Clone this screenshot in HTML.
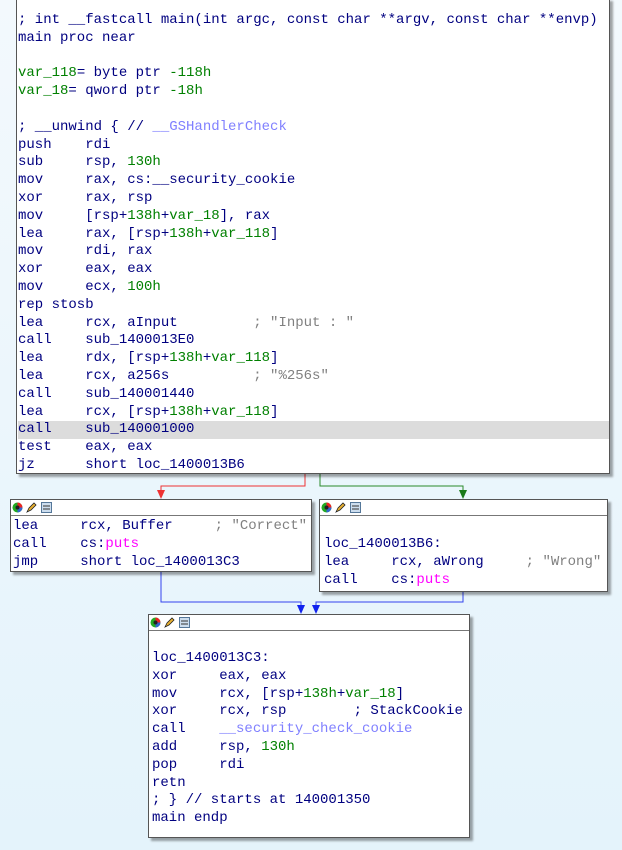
<!DOCTYPE html>
<html><head><style>
body{margin:0;width:622px;height:850px;background:linear-gradient(180deg,#f3f9fd,#e4f3fb);position:relative;overflow:hidden;font-family:"Liberation Mono",monospace;font-size:14px;}
.box{position:absolute;background:#fff;border:1px solid #555;box-shadow:3px 3px 2px rgba(0,0,0,.35);}
pre{margin:0;font:inherit;line-height:17.8px;color:#000080;white-space:pre;}
.g{color:#008000}.c{color:#808080}.p{color:#ff00ff}.l{color:#8080ff}
.hdr{height:15px;border-bottom:1px solid #777;position:relative}
.hl{background:#dcdcdc;display:block}
.ic{position:absolute;top:2px;width:11px;height:11px}
</style></head><body>
<svg width="622" height="850" style="position:absolute;left:0;top:0">
<polyline points="305,474 305,486 161,486 161,496" fill="none" stroke="#e33" stroke-width="1"/>
<polygon points="157,490 165,490 161,499" fill="#e33"/>
<polyline points="320,474 320,486 463,486 463,496" fill="none" stroke="#2a8a2a" stroke-width="1"/>
<polygon points="459,490 467,490 463,499" fill="#1a7a1a"/>
<polyline points="161,571 161,602 301,602 301,611" fill="none" stroke="#3344ee"/>
<polygon points="297,605 305,605 301,614" fill="#1122ee"/>
<polyline points="463,591 463,602 316,602 316,611" fill="none" stroke="#3344ee"/>
<polygon points="312,605 320,605 316,614" fill="#1122ee"/>
</svg>

<div class="box" style="left:16px;top:-2px;width:592px;height:475px;border-top:none">
<pre style="position:absolute;left:1px;top:14px;width:591px">; int __fastcall main(int argc, const char **argv, const char **envp)
main proc near

<span class="g">var_118</span>= byte ptr <span class="g">-118h</span>
<span class="g">var_18</span>= qword ptr <span class="g">-18h</span>

; __unwind { // <span class="l">__GSHandlerCheck</span>
push    rdi
sub     rsp, <span class="g">130h</span>
mov     rax, cs:__security_cookie
xor     rax, rsp
mov     [rsp+<span class="g">138h</span>+<span class="g">var_18</span>], rax
lea     rax, [rsp+<span class="g">138h</span>+<span class="g">var_118</span>]
mov     rdi, rax
xor     eax, eax
mov     ecx, <span class="g">100h</span>
rep stosb
lea     rcx, aInput         <span class="c">; "Input : "</span>
call    sub_1400013E0
lea     rdx, [rsp+<span class="g">138h</span>+<span class="g">var_118</span>]
lea     rcx, a256s          <span class="c">; "%256s"</span>
call    sub_140001440
lea     rcx, [rsp+<span class="g">138h</span>+<span class="g">var_118</span>]
<span class="hl">call    sub_140001000</span>test    eax, eax
jz      short loc_1400013B6</pre>
</div>

<div class="box" style="left:10px;top:499px;width:300px;height:71px">
<div class="hdr"><svg class="ic" style="left:1px" viewBox="0 0 11 11"><circle cx="5.5" cy="5.5" r="5" fill="#2a2"/><path d="M5.5 5.5L5.5 .5A5 5 0 0 1 10.5 5.5Z" fill="#e22"/><path d="M5.5 5.5L10.5 5.5A5 5 0 0 1 5.5 10.5Z" fill="#36c"/><circle cx="5.5" cy="5.5" r="2" fill="#222"/></svg><svg class="ic" style="left:15px" viewBox="0 0 11 11"><path d="M1 10L3 6 8 1 10 3 5 8Z" fill="#e8b030" stroke="#222" stroke-width=".8"/></svg><svg class="ic" style="left:30px" viewBox="0 0 11 11"><rect x=".5" y=".5" width="10" height="10" fill="#cde" stroke="#579"/><path d="M2 4h7M2 7h7" stroke="#333"/></svg></div>
<pre style="position:absolute;left:2px;top:18px">lea     rcx, Buffer     <span class="c">; "Correct"</span>
call    cs:<span class="p">puts</span>
jmp     short loc_1400013C3</pre>
</div>

<div class="box" style="left:319px;top:499px;width:287px;height:91px">
<div class="hdr"><svg class="ic" style="left:1px" viewBox="0 0 11 11"><circle cx="5.5" cy="5.5" r="5" fill="#2a2"/><path d="M5.5 5.5L5.5 .5A5 5 0 0 1 10.5 5.5Z" fill="#e22"/><path d="M5.5 5.5L10.5 5.5A5 5 0 0 1 5.5 10.5Z" fill="#36c"/><circle cx="5.5" cy="5.5" r="2" fill="#222"/></svg><svg class="ic" style="left:15px" viewBox="0 0 11 11"><path d="M1 10L3 6 8 1 10 3 5 8Z" fill="#e8b030" stroke="#222" stroke-width=".8"/></svg><svg class="ic" style="left:30px" viewBox="0 0 11 11"><rect x=".5" y=".5" width="10" height="10" fill="#cde" stroke="#579"/><path d="M2 4h7M2 7h7" stroke="#333"/></svg></div>
<pre style="position:absolute;left:4px;top:36px">loc_1400013B6:
lea     rcx, aWrong     <span class="c">; "Wrong"</span>
call    cs:<span class="p">puts</span></pre>
</div>

<div class="box" style="left:148px;top:614px;width:320px;height:222px">
<div class="hdr"><svg class="ic" style="left:1px" viewBox="0 0 11 11"><circle cx="5.5" cy="5.5" r="5" fill="#2a2"/><path d="M5.5 5.5L5.5 .5A5 5 0 0 1 10.5 5.5Z" fill="#e22"/><path d="M5.5 5.5L10.5 5.5A5 5 0 0 1 5.5 10.5Z" fill="#36c"/><circle cx="5.5" cy="5.5" r="2" fill="#222"/></svg><svg class="ic" style="left:15px" viewBox="0 0 11 11"><path d="M1 10L3 6 8 1 10 3 5 8Z" fill="#e8b030" stroke="#222" stroke-width=".8"/></svg><svg class="ic" style="left:30px" viewBox="0 0 11 11"><rect x=".5" y=".5" width="10" height="10" fill="#cde" stroke="#579"/><path d="M2 4h7M2 7h7" stroke="#333"/></svg></div>
<pre style="position:absolute;left:3px;top:35px">loc_1400013C3:
xor     eax, eax
mov     rcx, [rsp+<span class="g">138h</span>+<span class="g">var_18</span>]
xor     rcx, rsp        ; StackCookie
call    <span class="l">__security_check_cookie</span>
add     rsp, <span class="g">130h</span>
pop     rdi
retn
; } // starts at 140001350
main endp</pre>
</div>
</body></html>
